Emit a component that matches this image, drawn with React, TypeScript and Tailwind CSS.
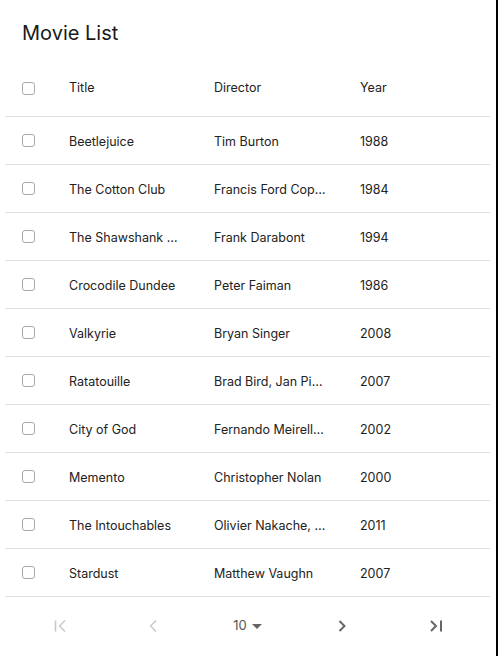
import React from "react";

const movies = [
  { title: "Beetlejuice", director: "Tim Burton", year: 1988 },
  { title: "The Cotton Club", director: "Francis Ford Coppola", year: 1984 },
  { title: "The Shawshank Redemption", director: "Frank Darabont", year: 1994 },
  { title: "Crocodile Dundee", director: "Peter Faiman", year: 1986 },
  { title: "Valkyrie", director: "Bryan Singer", year: 2008 },
  { title: "Ratatouille", director: "Brad Bird, Jan Pinkava", year: 2007 },
  { title: "City of God", director: "Fernando Meirelles, Kátia Lund", year: 2002 },
  { title: "Memento", director: "Christopher Nolan", year: 2000 },
  { title: "The Intouchables", director: "Olivier Nakache, Eric Toledano", year: 2011 },
  { title: "Stardust", director: "Matthew Vaughn", year: 2007 },
];

const Checkbox = () => (
  <div className="w-[13px] h-[13px] rounded-[3px] border border-[#a9a9a9] bg-white" />
);

const rowGrid = "grid grid-cols-[64px_145px_146px_1fr] items-center";

export default function App() {
  return (
    <div
      className="w-[498px] h-[656px] bg-white border-r-2 border-black overflow-hidden text-[#222]"
      style={{ fontFamily: "Inter, 'Noto Sans', 'Liberation Sans', sans-serif" }}
    >
      <div className="ml-[5px] w-[485px]">
        {/* Title */}
        <div className="h-[60px] pt-[19px] pl-[17px]">
          <h1 className="text-[20px] leading-7 font-normal text-[#1a1a1a]">Movie List</h1>
        </div>

        {/* Header */}
        <div className={`${rowGrid} h-[57px] border-b border-[#e0e0e0] text-[12.5px]`}>
          <div className="pl-[17px]">
            <Checkbox />
          </div>
          <div className="pr-[35px] truncate">Title</div>
          <div className="pr-[35px] truncate">Director</div>
          <div className="truncate">Year</div>
        </div>

        {/* Rows */}
        {movies.map((m) => (
          <div
            key={m.title}
            className={`${rowGrid} h-[48px] border-b border-[#e0e0e0] text-[12.5px]`}
          >
            <div className="pl-[17px]">
              <Checkbox />
            </div>
            <div className="pt-[4px] pr-[35px] truncate">{m.title}</div>
            <div className="pt-[4px] pr-[33px] truncate">{m.director}</div>
            <div className="pt-[4px] truncate">{m.year}</div>
          </div>
        ))}

        {/* Pagination */}
        <div className="h-[58px] px-[7px] grid grid-cols-5 items-center">
          <div className="flex justify-center pl-[4px]">
            <svg width="16" height="14" viewBox="0 0 16 14" fill="none">
              <path d="M2.5 1.5v11" stroke="#c8c8c8" strokeWidth="1.6" />
              <path d="M12 1.5L6.5 7l5.5 5.5" stroke="#c8c8c8" strokeWidth="1.4" />
            </svg>
          </div>
          <div className="flex justify-center">
            <svg width="10" height="14" viewBox="0 0 10 14" fill="none">
              <path d="M8 1.5L2.5 7 8 12.5" stroke="#c8c8c8" strokeWidth="1.4" />
            </svg>
          </div>
          <div className="flex justify-center items-center gap-[5px] text-[13px] text-[#555]">
            <span>10</span>
            <svg width="10" height="5" viewBox="0 0 10 5">
              <path d="M0 0h10L5 5z" fill="#666" />
            </svg>
          </div>
          <div className="flex justify-center">
            <svg width="10" height="14" viewBox="0 0 10 14" fill="none">
              <path d="M2.5 2l5 5-5 5" stroke="#666" strokeWidth="2" />
            </svg>
          </div>
          <div className="flex justify-center">
            <svg width="16" height="14" viewBox="0 0 16 14" fill="none">
              <path d="M3 2l5 5-5 5" stroke="#666" strokeWidth="2" />
              <path d="M13 1.5v11" stroke="#666" strokeWidth="2" />
            </svg>
          </div>
        </div>
      </div>
    </div>
  );
}
